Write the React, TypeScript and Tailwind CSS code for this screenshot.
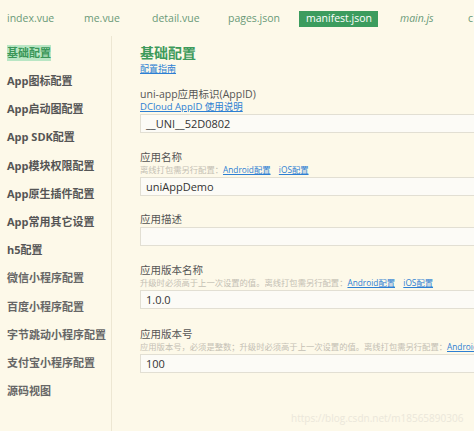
const tabs = [
  { t: "index.vue", w: "w-[77px]" },
  { t: "me.vue", w: "w-[68px]" },
  { t: "detail.vue", w: "w-[76px]" },
  { t: "pages.json", w: "w-[71px]" },
];

const menu = [
  { label: "基础配置", active: true, bold: true },
  { label: "App图标配置", bold: true },
  { label: "App启动图配置", bold: true },
  { label: "App SDK配置", bold: true },
  { label: "App模块权限配置", bold: true },
  { label: "App原生插件配置", bold: true },
  { label: "App常用其它设置", bold: true },
  { label: "h5配置", bold: true },
  { label: "微信小程序配置" },
  { label: "百度小程序配置" },
  { label: "字节跳动小程序配置" },
  { label: "支付宝小程序配置" },
  { label: "源码视图" },
];

function Link({ children }: { children: React.ReactNode }) {
  return <span className="text-[#2d7fd3] underline underline-offset-1">{children}</span>;
}

function Field({ label, hint, value, mt }: { label: string; hint?: React.ReactNode; value: string; mt: string }) {
  return (
    <div className={mt}>
      <div className="text-[10.5px] leading-[13px] text-[#555]">{label}</div>
      {hint && <div className="text-[8.3px] leading-[12px] text-[#c4c0b4] whitespace-nowrap">{hint}</div>}
      <div className="mt-[1px] h-[19px] w-[360px] border border-[#e2dfd3] bg-[#fcfbf6] px-[5px] text-[11px] leading-[17px] text-[#333]">{value}</div>
    </div>
  );
}

export default function App() {
  return (
    <div className="h-[431px] w-[474px] overflow-hidden bg-[#fdf9e9]" style={{ fontFamily: '"Open Sans", "Noto Sans CJK SC", sans-serif' }}>
      <div className="flex h-[36px] items-center pl-[7px] pt-[2px] text-[10.5px] text-[#6a9a78] whitespace-nowrap">
        {tabs.map((t) => (
          <div key={t.t} className={`${t.w} shrink-0`}>{t.t}</div>
        ))}
        <div className="mr-[22px] flex h-[16px] w-[79px] shrink-0 items-center bg-[#3c9c5e] pl-[7px] text-[10.5px] text-white">manifest.json</div>
        <div className="w-[68px] shrink-0 italic">main.js</div>
        <div className="shrink-0">c</div>
      </div>
      <div className="flex">
        <div className="h-[395px] w-[112px] shrink-0 border-r border-[#ede7d3] pt-[3px]">
          {menu.map((m) => (
            <div key={m.label} className="flex h-[28.2px] items-center pl-[7px] whitespace-nowrap">
              <span
                className={
                  m.active
                    ? "bg-[#b9e6c4] text-[11px] font-bold text-[#3a9658]"
                    : m.bold
                      ? "text-[11px] font-bold text-[#555]"
                      : "text-[11px] font-semibold text-[#666]"
                }
              >
                {m.label}
              </span>
            </div>
          ))}
        </div>
        <div className="relative flex-1 pl-[28px] pt-[7px]">
          <div className="text-[14px] font-bold leading-[20px] text-[#3e9a5b]">基础配置</div>
          <div className="text-[9px] leading-[12px]"><Link>配置指南</Link></div>
          <Field
            mt="mt-[13px]"
            label="uni-app应用标识(AppID)"
            hint={<span className="text-[9.5px]"><Link>DCloud AppID 使用说明</Link></span>}
            value="__UNI__52D0802"
          />
          <Field
            mt="mt-[18px]"
            label="应用名称"
            hint={<>离线打包需另行配置：<Link>Android配置</Link>　<Link>iOS配置</Link></>}
            value="uniAppDemo"
          />
          <Field mt="mt-[17px]" label="应用描述" value="" />
          <Field
            mt="mt-[18px]"
            label="应用版本名称"
            hint={<>升级时必须高于上一次设置的值。离线打包需另行配置：<Link>Android配置</Link>　<Link>iOS配置</Link></>}
            value="1.0.0"
          />
          <Field
            mt="mt-[19px]"
            label="应用版本号"
            hint={<>应用版本号，必须是整数；升级时必须高于上一次设置的值。离线打包需另行配置：<Link>Android配置</Link>　<Link>iOS配置</Link></>}
            value="100"
          />
          <div className="absolute left-[179px] top-[376px] text-[10px] leading-[12px] text-[#ebe7da] whitespace-nowrap">https://blog.csdn.net/m18565890306</div>
        </div>
      </div>
    </div>
  );
}
